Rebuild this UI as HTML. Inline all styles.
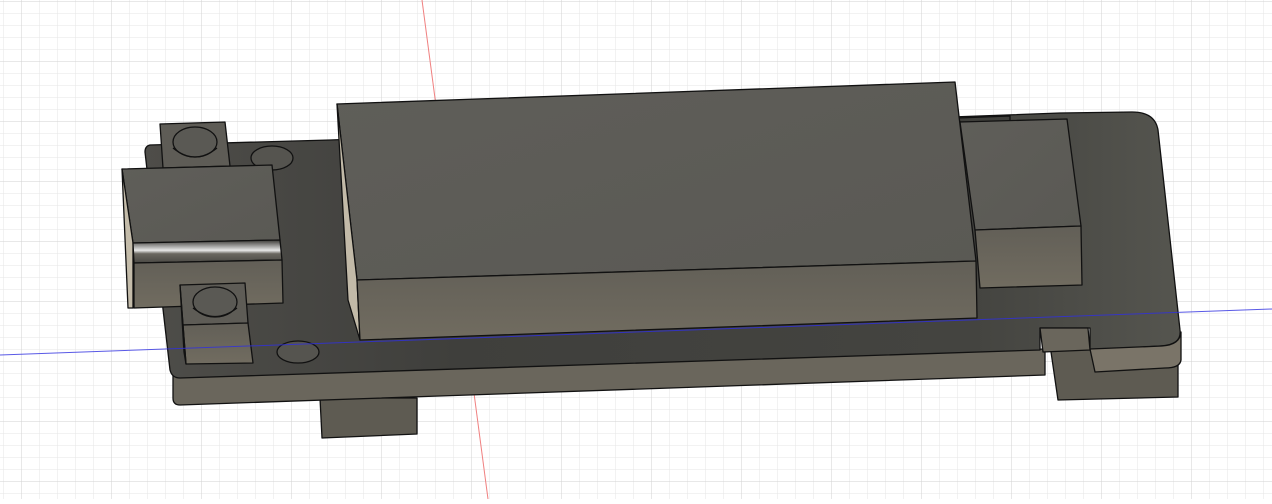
<!DOCTYPE html><html><head><style>html,body{margin:0;padding:0;background:#fff;overflow:hidden}</style></head><body>
<svg width="1272" height="499" viewBox="0 0 1272 499" xmlns="http://www.w3.org/2000/svg">
<defs>
<pattern id="g" width="18" height="12" patternUnits="userSpaceOnUse" x="4" y="2"><path d="M18 0V12M0 12H18" stroke="#e6e6e6" stroke-width="1" fill="none"/></pattern>
<pattern id="G" width="90" height="60" patternUnits="userSpaceOnUse" x="22" y="2"><path d="M90 0V60M0 60H90" stroke="#d2d2d2" stroke-width="1" fill="none"/></pattern>
<linearGradient id="plate" x1="0" y1="0" x2="1" y2="0"><stop offset="0" stop-color="#4e4d49"/><stop offset="0.3" stop-color="#3f3f3c"/><stop offset="0.8" stop-color="#444440"/><stop offset="1" stop-color="#55554f"/></linearGradient>
<linearGradient id="front" x1="0" y1="0" x2="0" y2="1"><stop offset="0" stop-color="#625f57"/><stop offset="1" stop-color="#716c60"/></linearGradient>
<linearGradient id="top" x1="0" y1="0" x2="1" y2="1"><stop offset="0" stop-color="#5f5e59"/><stop offset="1" stop-color="#5a5954"/></linearGradient>
<linearGradient id="shine" x1="0" y1="0" x2="0" y2="1"><stop offset="0" stop-color="#3a3935"/><stop offset="0.45" stop-color="#e8e8e8"/><stop offset="0.6" stop-color="#6a6760"/><stop offset="1" stop-color="#4a4944"/></linearGradient>
</defs>
<rect width="1272" height="499" fill="#fff"/>
<rect width="1272" height="499" fill="url(#g)"/>
<rect width="1272" height="499" fill="url(#G)"/>
<line x1="422" y1="0" x2="488" y2="499" stroke="#f08080" stroke-width="1"/>
<g stroke="#111" stroke-width="1.3" stroke-linejoin="round">
<path d="M320 398H417V434L322 438Z" fill="#5e5b52"/>
<path d="M1050 345H1178V397L1058 400Z" fill="#5e5b52"/>
<path d="M173 375L1045 349V375L180 405Q173 405 173 398Z" fill="#6a665c"/>
<path d="M150 145L330 140L1060 113L1132 112Q1155 112 1158 130L1180 330Q1182 345 1160 346L1090 350V328H1040V350L180 378Q172 378 170 370L145 152Q145 146 150 145Z" fill="url(#plate)"/>
<path d="M1090 349L1162 346Q1180 345 1181 332V360Q1180 368 1165 368L1095 372Z" fill="#7a7468"/>
<path d="M1040 328H1088L1090 350L1043 352Z" fill="#6a665c"/>
<ellipse cx="272" cy="158" rx="21" ry="12" fill="#55544f"/>
<ellipse cx="298" cy="352" rx="21" ry="11" fill="#55544f"/>
<path d="M160 124L225 122L230 166L163 168Z" fill="#5e5c56"/>
<ellipse cx="195" cy="142" rx="22" ry="15" fill="#5a5954"/>
<path d="M173 148Q195 166 217 148" fill="none"/>
<path d="M122 169L272 165L280 240L133 243Z" fill="url(#top)"/>
<path d="M122 169L133 243V308L128 308Z" fill="#c4bcaa"/>
<path d="M133 243L280 240L282 260L134 263Z" fill="url(#shine)"/>
<path d="M134 263L282 260L283 303L134 308Z" fill="url(#front)"/>
<path d="M180 285L245 283L248 323L183 325Z" fill="#5e5c56"/>
<ellipse cx="215" cy="302" rx="22" ry="15" fill="#5a5954"/>
<path d="M193 308Q215 325 237 308" fill="none"/>
<path d="M183 325L248 323L253 363L186 364Z" fill="url(#front)"/>
<path d="M180 285L183 325L186 364L184 352Z" fill="#c4bcaa"/>
<path d="M958 118L1010 116V122H960Z" fill="#3f3f3b"/>
<path d="M960 122L1067 119L1081 226L975 230Z" fill="url(#top)"/>
<path d="M975 230L1081 226L1082 285L980 288Z" fill="url(#front)"/>
<path d="M337 104L955 82L976 261L357 280Z" fill="url(#top)"/>
<path d="M337 104L357 280L360 340L348 300Z" fill="#c2baa8"/>
<path d="M357 280L976 261L977 318L360 340Z" fill="url(#front)"/>
</g>
<line x1="0" y1="355" x2="1272" y2="309" stroke="#3030e0" stroke-width="1" opacity="0.8"/>
</svg>
</body></html>
